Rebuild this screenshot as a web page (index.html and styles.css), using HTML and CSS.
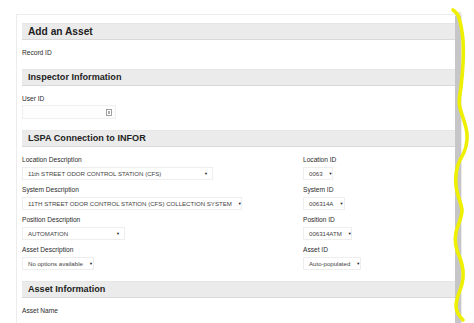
FILE: index.html
```html
<!DOCTYPE html>
<html>
<head>
<meta charset="utf-8">
<link rel="stylesheet" href="styles.css">
</head>
<body>
<div class="panel">
  <div class="content">
    <div class="section-head title">Add an Asset</div>
    <div class="label first">Record ID</div>

    <div class="section-head gap-lg">Inspector Information</div>
    <div class="label first">User ID</div>
    <div class="input">
      <svg class="key" width="6" height="7" viewBox="0 0 6 7"><rect x="0.5" y="0.5" width="5" height="6" fill="#fff" stroke="#888" stroke-width="0.8"/><rect x="2.4" y="2" width="1.2" height="3" fill="#777"/></svg>
    </div>

    <div class="section-head gap-md">LSPA Connection to INFOR</div>
    <div class="grid">
      <div class="field">
        <div class="label">Location Description</div>
        <div class="select w-loc"><span>11th STREET ODOR CONTROL STATION (CFS)</span><i>▼</i></div>
      </div>
      <div class="field">
        <div class="label">Location ID</div>
        <div class="select w-locid"><span>0063</span><i>▼</i></div>
      </div>
      <div class="field">
        <div class="label">System Description</div>
        <div class="select w-sys"><span>11TH STREET ODOR CONTROL STATION (CFS) COLLECTION SYSTEM</span><i>▼</i></div>
      </div>
      <div class="field">
        <div class="label">System ID</div>
        <div class="select w-sysid"><span>006314A</span><i>▼</i></div>
      </div>
      <div class="field">
        <div class="label">Position Description</div>
        <div class="select w-pos"><span>AUTOMATION</span><i>▼</i></div>
      </div>
      <div class="field">
        <div class="label">Position ID</div>
        <div class="select w-posid"><span>006314ATM</span><i>▼</i></div>
      </div>
      <div class="field">
        <div class="label">Asset Description</div>
        <div class="select w-asset"><span>No options available</span><i>▼</i></div>
      </div>
      <div class="field">
        <div class="label">Asset ID</div>
        <div class="select w-assetid"><span>Auto-populated</span><i>▼</i></div>
      </div>
    </div>

    <div class="section-head gap-md">Asset Information</div>
    <div class="label first">Asset Name</div>
  </div>
  <div class="scrollbar"><div class="scroll-btn"></div></div>
</div>
<svg class="scribble" width="474" height="323" viewBox="0 0 474 323">
  <path d="M453 10 C456 12 458 14 459 18 C461 24 462 30 463 40 C464 55 463 70 461 87 C460 96 458 100 460 108 C462 116 466 124 467 134 C468 144 465 152 460 160 C456 168 455 176 456 186 C457 195 461 202 462 210 C462 218 458 224 456 232 C454 242 456 250 460 258 C463 266 464 276 462 284 C460 292 456 298 456 306 C456 312 459 316 463 320" fill="none" stroke="#eef000" stroke-width="3.6" stroke-linecap="round" stroke-linejoin="round"/>
</svg>
</body>
</html>
```

FILE: styles.css
```css
* { box-sizing: border-box; }
html, body {
  margin: 0;
  padding: 0;
  background: #fff;
  width: 474px;
  height: 323px;
  overflow: hidden;
  font-family: "Liberation Sans", Arial, sans-serif;
  color: #333;
}
.panel {
  margin: 14px 0 0 16px;
  width: 446px;
  height: 309px;
  border: 1px solid #ececec;
  border-bottom: none;
  display: flex;
}
.content {
  flex: 1;
  padding: 8px 0 0 5px;
}
.section-head {
  height: 17px;
  background: #ebebeb;
  border-top: 1px solid #e6e6e6;
  border-bottom: 1px solid #d9d9d9;
  font-size: 9.1px;
  font-weight: bold;
  line-height: 15px;
  padding-left: 6px;
  color: #222;
}
.section-head.title { font-size: 10.2px; }
.gap-lg { margin-top: 12px; }
.gap-md { margin-top: 11px; }
.label {
  font-size: 6.6px;
  line-height: 8px;
  height: 8px;
  color: #2a2a2a;
  white-space: nowrap;
}
.label.first { margin-top: 9px; }
.input {
  margin-top: 2px;
  width: 94px;
  height: 14px;
  border: 1px solid #efefef;
  background: #fdfdfd;
  display: flex;
  justify-content: flex-end;
  align-items: center;
  padding-right: 3px;
}
.key { display: block; }
.grid {
  display: grid;
  grid-template-columns: 281px 1fr;
  row-gap: 6px;
  margin-top: 9px;
}
.field { display: flex; flex-direction: column; }
.select {
  margin-top: 3px;
  height: 13px;
  border: 1px solid #eeeeee;
  background: #fff;
  display: flex;
  align-items: center;
  justify-content: space-between;
  padding: 0 4px 0 5px;
  font-size: 6.1px;
  color: #444;
  white-space: nowrap;
}
.select span { margin-right: 6px; }
.select i {
  font-style: normal;
  font-size: 4px;
  color: #222;
}
.w-loc { width: 191px; }
.w-sys { width: 220px; }
.w-pos { width: 103px; }
.w-asset { width: 72px; }
.w-locid { width: 30px; }
.w-sysid { width: 42px; }
.w-posid { width: 49px; }
.w-assetid { width: 58px; }
.scrollbar {
  width: 6px;
  background: #c6c6c8;
  margin-top: -3px;
  position: relative;
}
.scroll-btn {
  height: 4px;
  background: #e4e4e4;
}
.scribble {
  position: absolute;
  left: 0;
  top: 0;
  pointer-events: none;
}
```
